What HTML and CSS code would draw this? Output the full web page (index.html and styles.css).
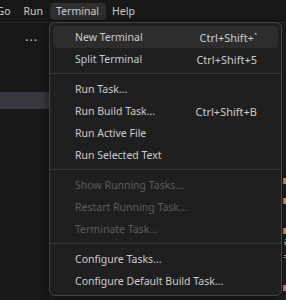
FILE: index.html
```html
<!DOCTYPE html>
<html>
<head>
<meta charset="utf-8">
<link rel="stylesheet" href="styles.css">
</head>
<body>
<div class="app">
  <div class="menubar">
    <span class="mb-item">Go</span>
    <span class="mb-item">Run</span>
    <span class="mb-item active">Terminal</span>
    <span class="mb-item">Help</span>
  </div>
  <div class="workbench">
    <div class="sidebar">
      <div class="sb-head"><span class="dots">···</span></div>
      <div class="sb-spacer"></div>
      <div class="sb-row selected"></div>
    </div>
    <div class="editor">
      <div class="ed-line l1"></div>
      <div class="ed-line l2"></div>
      <div class="ed-line l3"></div>
      <div class="ed-char c1">a</div>
      <div class="ed-char c2">=</div>
      <div class="ed-line l4"></div>
    </div>
  </div>
  <div class="menu">
    <div class="item hover"><span class="label">New Terminal</span><span class="key">Ctrl+Shift+`</span></div>
    <div class="item"><span class="label">Split Terminal</span><span class="key">Ctrl+Shift+5</span></div>
    <div class="sep"></div>
    <div class="item"><span class="label">Run Task...</span></div>
    <div class="item"><span class="label">Run Build Task...</span><span class="key">Ctrl+Shift+B</span></div>
    <div class="item"><span class="label">Run Active File</span></div>
    <div class="item"><span class="label">Run Selected Text</span></div>
    <div class="sep"></div>
    <div class="item disabled"><span class="label">Show Running Tasks...</span></div>
    <div class="item disabled"><span class="label">Restart Running Task...</span></div>
    <div class="item disabled"><span class="label">Terminate Task...</span></div>
    <div class="sep"></div>
    <div class="item"><span class="label">Configure Tasks...</span></div>
    <div class="item"><span class="label">Configure Default Build Task...</span></div>
  </div>
</div>
</body>
</html>
```
FILE: styles.css
```css
html, body {
  margin: 0;
  padding: 0;
  background: #181818;
  width: 286px;
  height: 300px;
  overflow: hidden;
}
.app {
  position: relative;
  width: 286px;
  height: 300px;
  font-family: "Noto Sans", "Open Sans", sans-serif;
  font-size: 10.5px;
  color: #cccccc;
  display: flex;
  flex-direction: column;
}
.menubar {
  height: 22px;
  display: flex;
  align-items: center;
  margin-left: -10px;
  background: #181818;
}
.mb-item {
  height: 17px;
  line-height: 17px;
  padding: 0 6.5px;
  border-radius: 4px;
  color: #cccccc;
}
.mb-item.active {
  background: #2e2e2e;
}
.workbench {
  flex: 1;
  display: flex;
}
.sidebar {
  width: 49px;
  background: #181818;
  border-top: 1px solid #222222;
  display: flex;
  flex-direction: column;
}
.sb-head {
  height: 28px;
  display: flex;
  align-items: center;
  justify-content: flex-end;
  padding-right: 11px;
}
.dots {
  font-size: 12px;
  letter-spacing: 1px;
  color: #cccccc;
  margin-top: 6px;
}
.sb-spacer { height: 41px; }
.sb-row.selected {
  height: 17px;
  background: #37373d;
}
.editor {
  flex: 1;
  background: #1f1f1f;
  border-top: 1px solid #2b2b2b;
  position: relative;
}
.ed-line, .ed-char { position: absolute; right: 0; }
.ed-line { width: 3px; height: 6px; background: #ce9178; }
.l1 { top: 155px; }
.l2 { top: 175px; }
.l3 { top: 205px; }
.l4 { top: 262px; }
.ed-char { font-size: 11px; color: #d4d4d4; right: -4px; }
.c1 { top: 210px; }
.c2 { top: 225px; }
.menu {
  position: absolute;
  left: 49px;
  top: 22px;
  width: 231px;
  background: #1f1f1f;
  border: 1px solid #454545;
  border-radius: 6px;
  padding: 3px 0;
  box-shadow: 0 2px 8px rgba(0,0,0,0.6);
}
.item {
  height: 22px;
  margin: 0 3px;
  padding: 0 21px 0 22px;
  display: flex;
  align-items: center;
  justify-content: space-between;
  border-radius: 4px;
  white-space: nowrap;
}
.key { font-size: 11px; }
.item.hover { background: #2d2d2d; }
.item.disabled { color: #5c5c5c; }
.sep {
  height: 1px;
  background: #3a3a3a;
  margin: 3px 0 4px;
}
```
